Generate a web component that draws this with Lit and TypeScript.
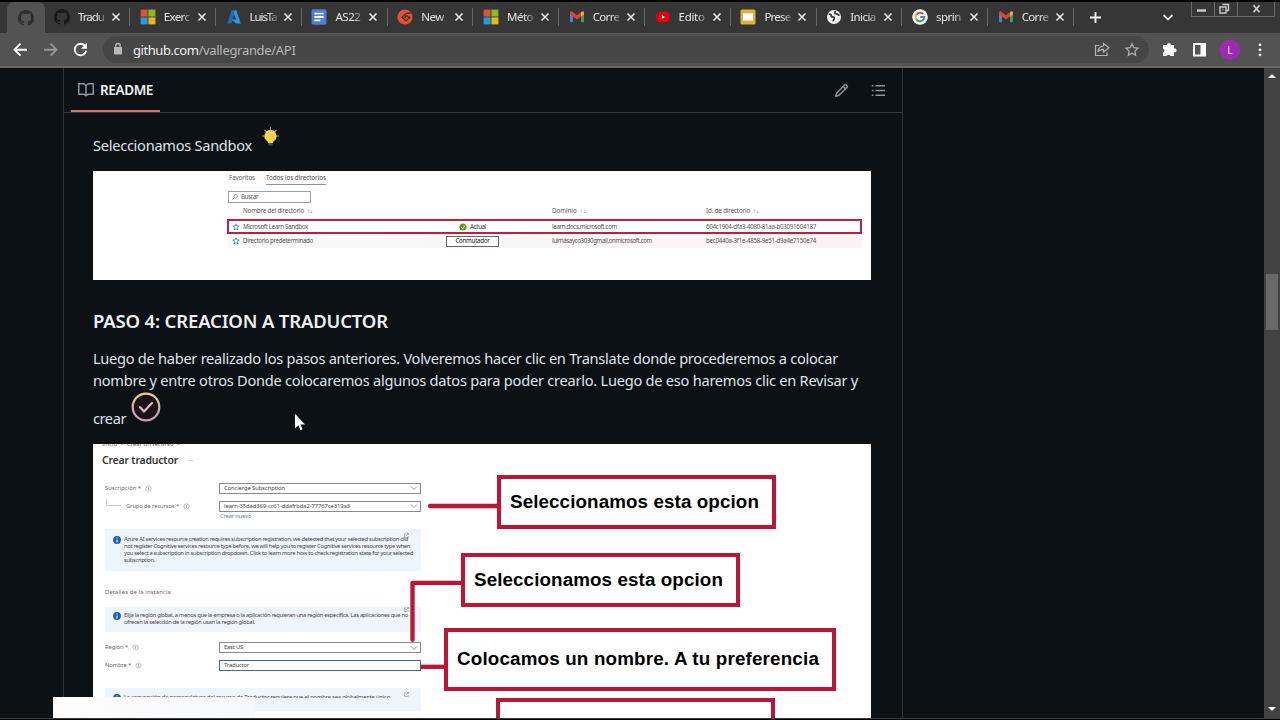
import { LitElement, html, svg, css } from "lit";
import { customElement, property } from "lit/decorators.js";

/** A single line of text whose tracking is tuned so that it fills a given width. */
@customElement("fit-text")
class FitText extends LitElement {
  @property() text = "";
  @property({ type: Number }) w = 0;
  static styles = css`
    :host { display: block; white-space: pre; flex: none; }
    .run { display: inline-block; }
  `;
  updated() {
    const run = this.renderRoot.querySelector(".run") as HTMLElement;
    run.style.letterSpacing = "0px";
    const natural = run.getBoundingClientRect().width;
    if (this.w && this.text.length) {
      run.style.letterSpacing = `${(this.w - natural) / this.text.length}px`;
    }
  }
  render() {
    return html`<span class="run">${this.text}</span>`;
  }
}

const fit = (text: string, w: number) => html`<fit-text .text=${text} .w=${w}></fit-text>`;

const octocat = "M8 0C3.58 0 0 3.58 0 8c0 3.54 2.29 6.53 5.47 7.59.4.07.55-.17.55-.38 0-.19-.01-.82-.01-1.49-2.01.37-2.53-.49-2.69-.94-.09-.23-.48-.94-.82-1.13-.28-.15-.68-.52-.01-.53.63-.01 1.08.58 1.23.82.72 1.21 1.87.87 2.33.66.07-.52.28-.87.51-1.07-1.78-.2-3.64-.89-3.64-3.95 0-.87.31-1.59.82-2.15-.08-.2-.36-1.02.08-2.12 0 0 .67-.21 2.2.82.64-.18 1.32-.27 2-.27s1.36.09 2 .27c1.53-1.04 2.2-.82 2.2-.82.44 1.1.16 1.92.08 2.12.51.56.82 1.27.82 2.15 0 3.07-1.87 3.75-3.65 3.95.29.25.54.73.54 1.48 0 1.07-.01 1.93-.01 2.2 0 .21.15.46.55.38A8 8 0 0 0 16 8c0-4.42-3.58-8-8-8z";

const favicons: Record<string, unknown> = {
  github: svg`<path fill="#191a1c" d=${octocat} />`,
  microsoft: svg`<path fill="#d8553a" d="M.6.6h7v7h-7z"/><path fill="#8cb829" d="M8.4.6h7v7h-7z"/><path fill="#1ba0dc" d="M.6 8.4h7v7h-7z"/><path fill="#e8b820" d="M8.4 8.4h7v7h-7z"/>`,
  azure: svg`<path fill="#1b6fb5" d="M5.6 1.2h4.3L5.2 14.4H1.4z"/><path fill="#2f97dc" d="M9 1.2h1.3l4.6 13.4H10L5.5 10.6h4.7L7.9 4.8z"/>`,
  docs: svg`<rect x=".5" y=".3" width="15" height="15.4" rx="1.8" fill="#4f7fd0"/><path stroke="#fff" stroke-width="1.8" d="M3.4 4.6h9.2M3.4 8h9.2M3.4 11.4h6"/>`,
  orange: svg`<circle cx="8" cy="8" r="7.6" fill="#dc5433"/><path d="M14.800 3.600 9.500 4.300 5 8.200l4 3.800 3.600-3.600-3.200-1.600L7.400 9" fill="none" stroke="#4a2a22" stroke-width="1.200"/>`,
  gmail: svg`<path fill="#4a80d8" d="M1 3.8h3v9.4H2a1 1 0 0 1-1-1z"/><path fill="#3fa35a" d="M12 3.8h3v8.4a1 1 0 0 1-1 1h-2z"/><path fill="#d94436" d="M1 3.6C1 2.4 2.5 2 3.4 2.7L8 6.3l4.6-3.6c.9-.7 2.4-.3 2.4.9v1.6L8 10.4 1 5.2z"/><path fill="#e5b32a" d="M12 3.2c1.3-1 3-.7 3 .8v1.4l-3 2.2z"/>`,
  youtube: svg`<rect x="1.400" y="2.800" width="13.200" height="10.400" rx="3.6" fill="#e3000b"/><path fill="#fff" d="M6.8 6.100 10 8l-3.200 1.900z"/>`,
  slides: svg`<rect x=".5" y=".5" width="15" height="15" rx="1.6" fill="#dcb33c"/><path fill="#fff" d="M3 4.4h10v7.2H3z"/>`,
  globe: svg`<circle cx="8" cy="8" r="7" fill="#f2f2f2"/><path d="M2.6 5.4c2-.6 3 .4 2.6 1.6C5 8.500 7.600 7.400 8.300 8.600c.6 1.200-1.300 1.800-1 3.800M9.800 2.200C8.300 3.500 8.600 5 10.500 4.900c1.400-.1 1.700 1.400 3.100 1.300" fill="none" stroke="#3a3a3a" stroke-width="1.800"/>`,
  google: svg`<circle cx="8" cy="8" r="7.8" fill="#f7f7f7"/><g fill="none" stroke-width="2"><path stroke="#dd4b3e" d="M4.300 5.800A4.300 4.300 0 0 1 11 4.900"/><path stroke="#e8b62c" d="M4.300 5.800a4.300 4.300 0 0 0 0 4.400"/><path stroke="#3d9f56" d="M4.300 10.200A4.300 4.300 0 0 0 11 11.100"/><path stroke="#4a80d8" d="M11 11.100A4.300 4.300 0 0 0 12.300 8H8.200"/></g>`,
};

const tabs: [string, string, number][] = [
  ["github", "Tradu", 26], ["microsoft", "Exerc", 25.5], ["azure", "LuisTa", 27], ["docs", "AS22", 25],
  ["orange", "New", 22.5], ["microsoft", "Méto", 26], ["gmail", "Corre", 26.5], ["youtube", "Edito", 26],
  ["slides", "Prese", 26], ["globe", "Inicia", 25.5], ["google", "sprin", 25], ["gmail", "Corre", 26.5],
];

@customElement("browser-chrome")
class BrowserChrome extends LitElement {
  static styles = css`
    :host { display: block; font-family: "Noto Sans", "Open Sans", sans-serif; }
    svg { display: block; flex: none; }
    .strip { box-sizing: border-box; height: 33px; border-top: 2px solid #000; background: #363636; display: flex; position: relative; }
    .active { box-sizing: border-box; width: 37.500px; height: 31px; margin-left: 7px; padding-left: 11px; background: #535353; border-radius: 7px 7px 0 0; display: flex; align-items: center; }
    .tab { box-sizing: border-box; width: 85.800px; height: 31px; padding-left: 9.500px; padding-bottom: 1px; display: flex; align-items: center; position: relative; }
    .tab::after { content: ""; position: absolute; right: 0; top: 6px; width: 1px; height: 18px; background: #666; }
    .title { width: 28px; margin-left: 8px; font-size: 11.500px; line-height: 18px; white-space: nowrap; color: #e6e6e6;
      -webkit-mask-image: linear-gradient(90deg, #000 65%, rgba(0, 0, 0, 0.25) 98%); }
    .close { margin-left: 5px; }
    .plus { margin: 9px 0 0 15px; }
    .chev { margin: 9px 0 0 60px; }
    .win { position: absolute; left: 1191px; top: 0; box-sizing: border-box; width: 84px; height: 15px; border: 1px solid #6a6a6a; border-top: 0; }
    .bar { height: 33px; background: #535353; border-bottom: 2px solid #67686a; display: flex; align-items: center; }
    .nav { width: 103px; }
    .omni { box-sizing: border-box; width: 1046px; height: 27px; margin-bottom: 1px; border-radius: 14px; background: #464646; display: flex; align-items: center; padding-left: 9px; }
    .url { display: flex; margin-left: 9px; padding-top: 1px; font-size: 13px; line-height: 20px; color: #b8b8b8; }
    .host { color: #f0f0f0; }
    .right { margin-left: auto; }
  `;
  render() {
    return html`
      <div class="strip">
        <div class="active"><svg width="16" height="16" viewBox="0 0 16 16"><path fill="#2d2e30" d=${octocat} /></svg></div>
        ${tabs.map(([icon, title, w]) => html`
          <div class="tab">
            <svg width="16" height="16" viewBox="0 0 16 16">${favicons[icon]}</svg>
            <div class="title">${fit(title, w)}</div>
            <svg class="close" width="10" height="10" viewBox="0 0 10 10"><path d="M1.500 1.500l7 7M8.500 1.500l-7 7" stroke="#eee" stroke-width="1.600"/></svg>
          </div>`)}
        <svg class="plus" width="13" height="13" viewBox="0 0 13 13"><path d="M6.500 1v11M1 6.500h11" stroke="#f2f2f2" stroke-width="1.900"/></svg>
        <svg class="chev" width="12" height="12" viewBox="0 0 12 12"><path d="M1.500 4 6 8.300 10.500 4" fill="none" stroke="#eee" stroke-width="1.800"/></svg>
        <div class="win">
          <svg width="82" height="14" viewBox="0 0 82 14" fill="none">
            <path d="M22.500 0v14M45.500 0v14" stroke="#6a6a6a"/>
            <path d="M5 8.500h9" stroke="#ccc" stroke-width="2.400"/>
            <path d="M30.500 2.500h6v6h-2M28 5h6v6h-6zM30.500 7.500h1" stroke="#ccc" stroke-width="1.400"/>
            <path d="M61.500 3.200l6 7M67.500 3.200l-6 7" stroke="#ccc" stroke-width="1.700"/>
          </svg>
        </div>
      </div>
      <div class="bar">
        <svg class="nav" width="103" height="33" viewBox="0 0 103 33" fill="none" stroke-width="1.900">
          <path d="M27 16.700H14.500M20.500 10.700l-6 6 6 6" stroke="#fff"/>
          <path d="M44 16.700h12M50.500 10.700l6 6-6 6" stroke="#959595"/>
          <path d="M85 12.800a5.800 5.800 0 1 0 1.200 5" stroke="#fff"/><path d="M87 9.800v6h-6z" fill="#fff"/>
        </svg>
        <div class="omni">
          <svg width="12" height="14" viewBox="0 0 12 14"><rect x="2" y="5" width="8" height="7.500" rx=".8" fill="#b9b9b9"/><path d="M3.800 5.500V3.700a2.200 2.200 0 0 1 4.400 0v1.800" fill="none" stroke="#b9b9b9" stroke-width="1.300"/></svg>
          <div class="url"><span class="host">${fit("github.com", 65.500)}</span>${fit("/vallegrande/API", 97)}</div>
          <svg class="right" width="66" height="27" viewBox="0 0 66 27" fill="none" stroke="#b4b4b4" stroke-width="1.200">
            <path d="M16.500 9.500h-4v10H24v-3"/><path d="M20.500 7.500l5.500 4.300-5.500 4.200v-2.600c-2.800 0-4.500.8-5.700 2.600.4-3.400 2-5.700 5.700-6z"/>
            <path d="M49 7.800l1.800 3.900 4.200.5-3.100 2.900.8 4.200L49 17.200l-3.700 2.100.8-4.200-3.100-2.900 4.200-.5z"/>
          </svg>
        </div>
        <svg width="131" height="33" viewBox="0 0 131 33">
          <path fill="#fff" d="M15 12h3a2 2 0 1 1 4 0h3v3.400a2 2 0 1 1 0 3.800V23h-3.600a2 2 0 0 0-3.600 0H14v-3.600a2 2 0 0 0 0-3.800V12z"/>
          <rect x="45" y="11" width="11" height="11.500" fill="none" stroke="#fff" stroke-width="2"/><path fill="#fff" d="M51.500 11h4.500v11.500h-4.500z"/>
          <circle cx="81" cy="16.800" r="10.300" fill="#9c2bb0"/>
          <text x="81" y="20.800" text-anchor="middle" font-size="10.500" fill="#eed8f2">L</text>
          <g fill="#f2f2f2"><circle cx="111" cy="11.800" r="1.400"/><circle cx="111" cy="16.800" r="1.400"/><circle cx="111" cy="21.800" r="1.400"/></g>
        </svg>
      </div>`;
  }
}

const star = html`<svg width="8" height="8" viewBox="0 0 8 8"><path d="M4 .8l.9 2.200 2.400.1-1.800 1.500.6 2.300L4 5.700 1.900 6.900l.6-2.300L.7 3.100l2.400-.1z" fill="none" stroke="#33799c" stroke-width=".8"/></svg>`;

@customElement("directory-figure")
class DirectoryFigure extends LitElement {
  static styles = css`
    :host { display: block; box-sizing: border-box; width: 778px; height: 109px; padding: 2px 9px 0 134px; background: #fff; overflow: hidden; color: #555; font: 6.200px/10px "Noto Sans", "Open Sans", sans-serif; }
    svg { display: block; }
    .tabs { display: flex; gap: 11px; height: 13px; padding-left: 2px; }
    .current { border-bottom: 1px solid #93929b; height: 11px; color: #444; }
    .search { box-sizing: border-box; width: 83px; height: 12px; margin: 5px 0 0 1px; border: 1px solid #9aa0a3; display: flex; align-items: center; gap: 3px; padding-left: 3px; }
    .row { display: grid; grid-template-columns: 5px 11px 203px 106px 154px 1fr; align-items: center; box-sizing: border-box; }
    .head { height: 16px; }
    .hit { height: 15px; border: 2px solid #bd1f40; padding: 0; grid-template-columns: 3px 11px 203px 106px 154px 1fr; }
    .other { height: 14px; background: linear-gradient(90deg, #f9f8f9, #f9f3f4); margin-left: 1px; grid-template-columns: 4px 11px 203px 106px 154px 1fr; }
    .status { display: flex; align-items: center; gap: 3px; padding-left: 13px; color: #333; }
    .btn { box-sizing: border-box; width: 53px; height: 11px; border: 1px solid #666; background: #fff; display: flex; align-items: center; justify-content: center; color: #222; }
  `;
  render() {
    return html`
      <div class="tabs">${fit("Favoritos", 26)}<div class="current">${fit("Todos los directorios", 60)}</div></div>
      <div class="search"><svg width="6" height="6" viewBox="0 0 6 6"><path d="M.5 5.500 2.300 3.700" stroke="#666" stroke-width=".7"/><circle cx="3.600" cy="2.400" r="1.700" fill="none" stroke="#777" stroke-width=".7"/></svg>${fit("Buscar", 17)}</div>
      <div class="row head"><i></i><i></i>${fit("Nombre del directorio  ↑↓", 70)}<i></i>${fit("Dominio  ↑↓", 34)}${fit("Id. de directorio  ↑↓", 53)}</div>
      <div class="row hit"><i></i>${star}${fit("Microsoft Learn Sandbox", 65)}
        <div class="status"><svg width="8" height="8" viewBox="0 0 8 8"><circle cx="4" cy="4" r="3.600" fill="#63991a"/><path d="M2.200 4l1.300 1.400L5.900 2.800" fill="none" stroke="#fff" stroke-width=".9"/></svg>${fit("Actual", 16)}</div>
        ${fit("learn.docs.microsoft.com", 65)}${fit("604c1904-dfa3-4080-81aa-b03091604187", 110)}</div>
      <div class="row other"><i></i>${star}${fit("Directorio predeterminado", 70)}<div class="btn">${fit("Conmutador", 34)}</div>
        ${fit("luimasayco3030gmail.onmicrosoft.com", 100)}${fit("bec0440a-3f1e-4858-9e51-d9a4e7150e74", 110)}</div>`;
  }
}

const infoMark = html`<svg width="8" height="8" viewBox="0 0 8 8"><circle cx="4" cy="4" r="3.900" fill="#1d5db0"/><path d="M4 1.500v1.100M4 3.500v3" stroke="#fff" stroke-width="1.100"/></svg>`;
const hint = html`<svg width="7" height="7" viewBox="0 0 7 7"><circle cx="3.500" cy="3.500" r="2.600" fill="none" stroke="#999" stroke-width=".6"/><path d="M3.500 2v3" stroke="#888" stroke-width=".6"/></svg>`;
const chevron = html`<svg width="8" height="6" viewBox="0 0 8 6"><path d="M1 1.500l3 3 3-3" fill="none" stroke="#777" stroke-width=".8"/></svg>`;
const launch = html`<svg class="launch" width="5" height="5" viewBox="0 0 5 5"><path d="M2 .8H.6v3.600h3.600V3M2 3 4.500.5M3 .5h1.500V2" fill="none" stroke="#888" stroke-width=".6"/></svg>`;

@customElement("translator-figure")
class TranslatorFigure extends LitElement {
  static styles = css`
    :host { display: block; position: relative; width: 778px; height: 274px; background: #fff; overflow: hidden; color: #555; font: 5.800px/7px "Noto Sans", "Open Sans", sans-serif; }
    svg { display: block; flex: none; }
    .form { width: 328px; padding-left: 12px; box-sizing: border-box; }
    .crumb { height: 4px; margin-left: -3px; overflow: hidden; display: flex; align-items: flex-end; }
    .crumb fit-text { height: 7px; }
    .h { height: 23.500px; margin-left: -3px; display: flex; align-items: center; gap: 10px; font: 600 10.500px/16px "Noto Sans", sans-serif; color: #333; }
    .dots { font-size: 6px; color: #999; }
    .row { display: grid; grid-template-columns: 114px 202px; height: 18px; align-items: center; }
    .lab { display: flex; align-items: center; gap: 4px; color: #666; }
    .box { box-sizing: border-box; height: 11px; border: 1px solid #8c8a8c; display: flex; align-items: center; justify-content: space-between; padding: 0 2px 0 4px; color: #444; }
    .focus { border-color: #2f6f93; }
    .link { margin-left: 115px; height: 11px; margin-top: -2.500px; color: #4f86ad; }
    .note { position: relative; box-sizing: border-box; width: 316px; background: #eff5fc; display: flex; padding: 7px 0 0 8px; gap: 3px; color: #444; line-height: 6.900px; }
    .launch { position: absolute; right: 12px; top: 4px; }
    .n1 { height: 42px; margin-top: 5.500px; }
    .n2 { height: 25px; padding-top: 5px; }
    .n2 .launch { top: 0; }
    .n3 { height: 23px; margin-top: 13.500px; padding-top: 6px; }
    .clip { display: flex; gap: 3px; height: 4px; overflow: hidden; }
    .sec { height: 36px; display: flex; align-items: center; padding-top: 6px; box-sizing: border-box; color: #666; }
    .mid { height: 7.500px; }
    .gap { height: 6.500px; }
    .lines { position: absolute; left: 0; top: 0; }
    .call { position: absolute; box-sizing: border-box; border: 4.500px solid #bd1536; background: #fff; color: #000; display: flex; align-items: center; padding-left: 9px; font: 700 18.800px/24px "Liberation Sans", Arial, sans-serif; width: 279px; height: 54px; }
    .c1 { left: 404px; top: 30.500px; }
    .c2 { left: 368px; top: 109px; }
    .c3 { left: 351px; top: 183.500px; width: 392px; height: 63px; }
    .c4 { left: 403px; top: 254px; }
  `;
  render() {
    return html`
      <div class="form">
        <div class="crumb">${fit("Inicio  >  Crear un recurso  >", 78)}</div>
        <div class="h">${fit("Crear traductor", 76)}<span class="dots">···</span></div>
        <div class="mid"></div>
        <div class="row"><div class="lab">${fit("Suscripción *", 36)}${hint}</div><div class="box">${fit("Concierge Subscription", 61)}${chevron}</div></div>
        <div class="row">
          <div class="lab"><svg width="17" height="14" viewBox="0 0 17 14"><path d="M1.500 0v6.500H16" fill="none" stroke="#bbb" stroke-width=".8"/></svg>${fit("Grupo de recursos *", 53)}${hint}</div>
          <div class="box">${fit("learn-35dad369-cc61-ddafrbda2-77767ce319a3", 126)}${chevron}</div>
        </div>
        <div class="link">${fit("Crear nuevo", 31)}</div>
        <div class="note n1">${infoMark}<div>
          ${fit("Azure AI services resource creation requires subscription registration, we detected that your selected subscription did", 284)}
          ${fit("not register Cognitive services resource type before, we will help you to register Cognitive services resource type when", 286)}
          ${fit("you select a subscription in subscription dropdown. Click to learn more how to check registration state for your selected", 289)}
          ${fit("subscription.", 31)}</div>${launch}</div>
        <div class="sec">${fit("Detalles de la instancia", 66)}</div>
        <div class="note n2">${infoMark}<div>
          ${fit("Elija la región global, a menos que la empresa o la aplicación requieran una región específica. Las aplicaciones que no", 284)}
          ${fit("ofrecen la selección de la región usan la región global.", 131)}</div>${launch}</div>
        <div class="gap"></div>
        <div class="row"><div class="lab">${fit("Región *", 23)}${hint}</div><div class="box">${fit("East US", 19)}${chevron}</div></div>
        <div class="row"><div class="lab">${fit("Nombre *", 26)}${hint}</div><div class="box focus">${fit("Traductor", 25)}</div></div>
        <div class="note n3"><div class="clip">${infoMark}${fit("La convención de nomenclatura del recurso de Traductor requiere que el nombre sea globalmente único", 266)}</div>${launch}</div>
      </div>
      <svg class="lines" width="450" height="274" viewBox="0 0 450 274" fill="none" stroke="#bd1536" stroke-width="4.300" stroke-linecap="round" stroke-linejoin="round">
        <path d="M337 62h70"/><path d="M370 138.800h-50.500v57"/><path stroke-linecap="butt" d="M328 222.800h26"/>
      </svg>
      <div class="call c1">${fit("Seleccionamos esta opcion", 249)}</div>
      <div class="call c2">${fit("Seleccionamos esta opcion", 249)}</div>
      <div class="call c3">${fit("Colocamos un nombre. A tu preferencia", 362)}</div>
      <div class="call c4"></div>`;
  }
}

@customElement("app-root")
class AppRoot extends LitElement {
  static styles = css`
    :host { display: block; position: relative; width: 1280px; height: 720px; overflow: hidden; background: #000; font-family: "Noto Sans", "Open Sans", sans-serif; }
    svg { display: block; flex: none; }
    .page { display: flex; justify-content: space-between; height: 651px; background: #0c1115; border-bottom: 1px solid #3c3c3c; box-sizing: border-box; overflow: hidden; }
    .readme { box-sizing: border-box; width: 840px; margin-left: 63px; border: solid #2e3338; border-width: 0 1px; color: #dfe4ea; font-size: 14.600px; }
    .head { box-sizing: border-box; height: 45px; border-bottom: 1px solid #343a40; display: flex; align-items: flex-start; padding: 0 16px 0 7px; }
    .tab { box-sizing: border-box; width: 89px; height: 44px; border-bottom: 2px solid #d0786a; padding: 1px 0 0 7px; display: flex; align-items: center; gap: 6px; font-weight: 600; font-size: 13.500px; color: #f0f3f6; }
    .tools { margin: 14.500px 0 0 auto; display: flex; gap: 22px; }
    .body { padding-left: 29px; }
    .line { display: flex; align-items: center; height: 22.500px; line-height: 22px; }
    .intro { height: 58px; padding-top: 6px; box-sizing: border-box; gap: 10px; }
    .bulb { margin-bottom: 16px; }
    h3 { margin: 30px 0 14.500px; font-size: 18.500px; line-height: 22px; font-weight: 600; color: #eef1f4; }
    .last { box-sizing: border-box; height: 52.500px; padding-top: 1px; gap: 5px; }
    .last svg { margin-top: -22px; }
    .scroll { width: 16px; background: #424242; display: flex; flex-direction: column; align-items: center; }
    .thumb { width: 12px; height: 56px; margin-top: 194px; background: #686868; }
    .down { margin-top: auto; margin-bottom: 5px; }
    .up { margin-top: 4px; }
    .cursor { position: absolute; left: 294px; top: 413px; }
    .toast { position: absolute; left: 53px; top: 697px; width: 202px; height: 21px; background: linear-gradient(90deg, #fdfdfd, #f7f8fb); }
  `;
  render() {
    return html`
      <browser-chrome></browser-chrome>
      <div class="page">
        <div class="readme">
          <div class="head">
            <div class="tab"><svg width="16" height="16" viewBox="0 0 16 16"><path fill="#8b949e" d="M0 1.750A.75.75 0 0 1 .75 1h4.253c1.227 0 2.317.59 3 1.501A3.743 3.743 0 0 1 11.006 1h4.245a.75.75 0 0 1 .75.75v10.500a.75.75 0 0 1-.75.75h-4.507a2.250 2.250 0 0 0-1.591.659l-.622.621a.75.75 0 0 1-1.060 0l-.622-.621A2.250 2.250 0 0 0 5.258 13H.75a.75.75 0 0 1-.75-.75Zm7.251 10.324.004-5.073-.002-2.253A2.250 2.250 0 0 0 5.003 2.500H1.500v9h3.757a3.750 3.750 0 0 1 1.994.574ZM8.755 4.750l-.004 7.322a3.752 3.752 0 0 1 1.992-.572H14.500v-9h-3.495a2.250 2.250 0 0 0-2.250 2.250Z"/></svg>${fit("README", 53)}</div>
            <div class="tools">
              <svg width="15" height="15" viewBox="0 0 16 16"><path fill="#8b949e" d="M11.013 1.427a1.750 1.750 0 0 1 2.474 0l1.086 1.086a1.750 1.750 0 0 1 0 2.474l-8.610 8.610c-.21.21-.47.364-.756.445l-3.251.93a.75.75 0 0 1-.927-.928l.929-3.250c.081-.286.235-.547.445-.758l8.610-8.610Zm.176 4.823L9.750 4.810l-6.286 6.287a.253.253 0 0 0-.064.108l-.558 1.953 1.953-.558a.253.253 0 0 0 .108-.064Zm1.238-3.763a.25.25 0 0 0-.354 0L10.811 3.750l1.439 1.440 1.263-1.263a.25.25 0 0 0 0-.354Z"/></svg>
              <svg width="15" height="15" viewBox="0 0 15 15"><path d="M4.500 2.800H14M4.500 7.500H14M4.500 12.200H14M.8 2.800h1.600M.8 7.500h1.600M.8 12.200h1.600" stroke="#8b949e" stroke-width="1.400"/></svg>
            </div>
          </div>
          <div class="body">
            <div class="line intro">${fit("Seleccionamos Sandbox", 159)}
              <svg class="bulb" width="17" height="21" viewBox="0 0 17 21"><path d="M8.500 0v3M0 9h3M14 9h3M2.500 3l2 2M14.500 3l-2 2" stroke="#b99b3e" stroke-width="1.100"/><path d="M8.500 3a6 6 0 0 1 3 11.200L11 16H6l-.5-1.800A6 6 0 0 1 8.500 3z" fill="#f5d055"/><path d="M6.300 16h4.400v2.500H6.300z" fill="#514b48"/></svg>
            </div>
            <directory-figure></directory-figure>
            <h3>${fit("PASO 4: CREACION A TRADUCTOR", 295)}</h3>
            <div class="line">${fit("Luego de haber realizado los pasos anteriores. Volveremos hacer clic en Translate donde procederemos a colocar", 745)}</div>
            <div class="line">${fit("nombre y entre otros Donde colocaremos algunos datos para poder crearlo. Luego de eso haremos clic en Revisar y", 765)}</div>
            <div class="line last">${fit("crear", 33)}
              <svg width="30" height="30" viewBox="0 0 30 30" fill="none"><defs><linearGradient id="ring" x1="0" y1="0" x2="0" y2="1"><stop offset="0" stop-color="#ecc98f"/><stop offset="1" stop-color="#bd9fc0"/></linearGradient></defs><circle cx="15" cy="15" r="13.300" fill="#1b1119" stroke="url(#ring)" stroke-width="2.200"/><path d="M9 15.300l4 4.200 8-8.500" stroke="#dcb9c0" stroke-width="2.300" stroke-linecap="round" stroke-linejoin="round"/></svg>
            </div>
            <translator-figure></translator-figure>
          </div>
        </div>
        <div class="scroll">
          <svg class="up" width="8" height="8" viewBox="0 0 8 8"><path fill="#fff" d="M0 6h8L4 2z"/></svg>
          <div class="thumb"></div>
          <svg class="down" width="8" height="8" viewBox="0 0 8 8"><path fill="#fff" d="M0 2h8L4 6z"/></svg>
        </div>
      </div>
      <div class="toast"></div>
      <svg class="cursor" width="12" height="18" viewBox="0 0 12 18"><path d="M1 .8v14.700l3.400-3.200 2.200 4.900 2-.9-2.200-4.700H11z" fill="#fff"/></svg>`;
  }
}
